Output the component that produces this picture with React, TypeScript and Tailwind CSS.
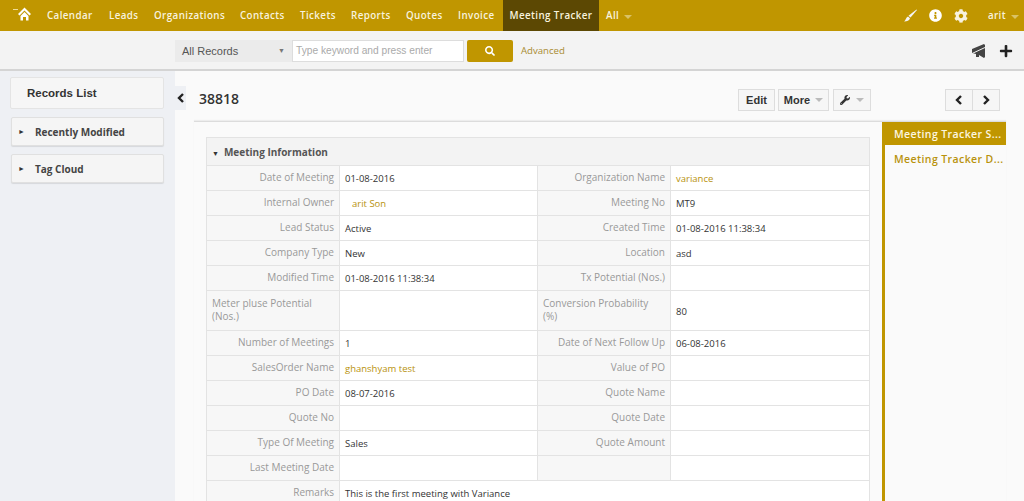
import { FaCog, FaInfoCircle, FaPlus, FaSearch, FaWrench } from "react-icons/fa";

const navItems = [
  { label: "Calendar", w: "w-[62px]" },
  { label: "Leads", w: "w-[45px]" },
  { label: "Organizations", w: "w-[86px]" },
  { label: "Contacts", w: "w-[60px]" },
  { label: "Tickets", w: "w-[51px]" },
  { label: "Reports", w: "w-[55px]" },
  { label: "Quotes", w: "w-[52px]" },
  { label: "Invoice", w: "w-[45px]" },
];

type Cell = { label: string; value?: string; link?: boolean; pad?: boolean };

const rows: { left: Cell; right: Cell; tall?: boolean }[] = [
  { left: { label: "Date of Meeting", value: "01-08-2016" }, right: { label: "Organization Name", value: "variance", link: true } },
  { left: { label: "Internal Owner", value: "arit Son", link: true, pad: true }, right: { label: "Meeting No", value: "MT9" } },
  { left: { label: "Lead Status", value: "Active" }, right: { label: "Created Time", value: "01-08-2016 11:38:34" } },
  { left: { label: "Company Type", value: "New" }, right: { label: "Location", value: "asd" } },
  { left: { label: "Modified Time", value: "01-08-2016 11:38:34" }, right: { label: "Tx Potential (Nos.)" } },
  { left: { label: "Meter pluse Potential (Nos.)" }, right: { label: "Conversion Probability (%)", value: "80" }, tall: true },
  { left: { label: "Number of Meetings", value: "1" }, right: { label: "Date of Next Follow Up", value: "06-08-2016" } },
  { left: { label: "SalesOrder Name", value: "ghanshyam test", link: true }, right: { label: "Value of PO" } },
  { left: { label: "PO Date", value: "08-07-2016" }, right: { label: "Quote Name" } },
  { left: { label: "Quote No" }, right: { label: "Quote Date" } },
  { left: { label: "Type Of Meeting", value: "Sales" }, right: { label: "Quote Amount" } },
  { left: { label: "Last Meeting Date" }, right: { label: "" } },
];

function Chevron({ dir }: { dir: "left" | "right" }) {
  return (
    <svg width="8" height="10" viewBox="0 0 8 10" fill="none" stroke="#222" strokeWidth="2.4">
      <polyline points={dir === "left" ? "6,1 2,5 6,9" : "2,1 6,5 2,9"} />
    </svg>
  );
}

function Label({ cell, tall }: { cell: Cell; tall?: boolean }) {
  return (
    <td className={`border border-[#e3e3e3] bg-[#f7f7f7] align-middle text-[10px] leading-[13px] text-[#999] ${tall ? "pb-[2px] pl-[5px] pr-[20px] text-left" : "px-[5px] pb-[1px] text-right"}`}>
      {cell.label}
    </td>
  );
}

function Value({ cell }: { cell: Cell }) {
  return (
    <td className={`border border-[#e3e3e3] bg-white px-[5px] pt-[1px] align-middle text-[9.5px] leading-[13px] ${cell.link ? "text-[#b8920c]" : "text-[#333]"} ${cell.pad ? "pl-[12px]" : ""}`}>
      {cell.value}
    </td>
  );
}

function SideBox({ label }: { label: string }) {
  return (
    <div className="mb-[8px] ml-[11px] flex h-[29px] w-[153px] items-center rounded-[2px] border border-[#e0e0e0] bg-[#f5f5f5] pl-[6px] pt-[1px] shadow-[0_1px_1px_rgba(0,0,0,0.1)]">
      <span className="mr-[10px] text-[7px] text-[#333]">►</span>
      <span className="text-[10px] font-bold text-[#444]">{label}</span>
    </div>
  );
}

export default function App() {
  return (
    <div className="h-[501px] w-[1024px] overflow-hidden bg-[#fafafa] font-['Open_Sans',sans-serif]">
      {/* top nav */}
      <div className="flex h-[31px] items-center bg-[#c09600] pt-[1px] text-[9.8px] font-semibold tracking-[0.4px] text-[#f8f2de]">
        <div className="-mt-[4px] flex w-[47px] justify-start pl-[13px]">
          <svg width="18" height="14" viewBox="0 0 18 14" fill="#fff">
            <rect x="0" y="2" width="5" height="1" fill="#f0dd99" />
            <path d="M11.5 0.5 L18 7 L16.5 8.5 L11.5 3.5 L6.5 8.5 L5 7 Z" />
            <path d="M11.5 5 L15.5 9 V13.5 H13 V10 H10 V13.5 H7.5 V9 Z" />
          </svg>
        </div>
        {navItems.map((n) => (
          <span key={n.label} className={n.w}>{n.label}</span>
        ))}
        <div className="-mt-[1px] flex h-[31px] w-[96px] items-center justify-center bg-[#5c4803] pt-[1px]">Meeting Tracker</div>
        <span className="ml-[7px]">All</span>
        <span className="ml-[5px] mt-[2px] border-x-[4px] border-t-[4px] border-x-transparent border-t-[#d9c266]" />
        <div className="-mt-[1px] ml-auto flex items-center">
          <svg width="13" height="13" viewBox="0 0 13 13" fill="#f5f5f5">
            <path d="M12.5 0.5 L13 1 L6.5 8.5 L4.5 6.8 Z" />
            <path d="M4 7.4 L6 9.2 C5.5 11.5 3 12.5 0 12.5 C1.8 11.5 1.8 8.5 4 7.4 Z" />
          </svg>
          <FaInfoCircle className="ml-[12px] text-[13px] text-white" />
          <FaCog className="ml-[12px] text-[14px] text-[#f8f2de]" />
          <span className="ml-[20px] pt-[1px]">arit</span>
          <span className="ml-[5px] mr-[5px] mt-[2px] border-x-[4px] border-t-[4px] border-x-transparent border-t-[#d9c266]" />
        </div>
      </div>

      {/* search toolbar */}
      <div className="flex h-[40px] items-center border-b-2 border-[#d4d4d4] bg-[#f3f3f3] pl-[175px] pr-[11px] pt-[2px]">
        <div className="flex h-[22px] w-[117px] items-center justify-between bg-[#ebebeb] px-[7px] font-['Liberation_Sans',sans-serif] text-[11px] text-[#555]">
          <span>All Records</span>
          <span className="text-[7px] text-[#777]">▼</span>
        </div>
        <div className="flex h-[22px] w-[172px] items-center border border-[#ddd] bg-white px-[3px] font-['Liberation_Sans',sans-serif] text-[10.2px] text-[#aaa]">
          Type keyword and press enter
        </div>
        <div className="ml-[3px] flex h-[22px] w-[46px] items-center justify-center rounded-[2px] bg-[#c09600]">
          <FaSearch className="text-[10px] text-white" />
        </div>
        <span className="ml-[8px] text-[9.6px] text-[#a98c32]">Advanced</span>
        <svg className="ml-auto" width="15" height="14" viewBox="0 0 15 14" fill="#444">
          <path d="M1 5 L13 0 L14 1 V13 L13 14 L8 11 V13 H5 V10 L1 9 Z" />
          <path d="M0 10 L14 3.5" stroke="#f3f3f3" strokeWidth="1" />
        </svg>
        <FaPlus className="ml-[13px] text-[14px] text-[#222]" />
      </div>

      <div className="flex h-[430px]">
        {/* sidebar */}
        <div className="h-full w-[175px] shrink-0 bg-[#eef0f4] pt-[6px]">
          <div className="mb-[8px] ml-[10px] flex h-[32px] w-[154px] items-center rounded-[2px] border border-[#e4e4e4] bg-[#f6f6f6] pl-[16px] pt-[2px] font-['Liberation_Sans',sans-serif] text-[11.5px] font-bold text-[#333]">
            Records List
          </div>
          <SideBox label="Recently Modified" />
          <SideBox label="Tag Cloud" />
        </div>

        {/* main */}
        <div className="relative flex-1">
          <div className="absolute left-0 top-[15px] flex h-[24px] w-[11px] items-center justify-center bg-[#eef0f4]">
            <Chevron dir="left" />
          </div>

          <div className="flex h-[50px] items-center pl-[24px] pr-[24px]">
            <h1 className="mt-[4px] text-[14px] font-semibold text-[#333]">38818</h1>
            <div className="ml-auto mt-[8px] flex items-center font-['Liberation_Sans',sans-serif] text-[11px] font-bold text-[#333]">
              <div className="flex h-[22px] w-[37px] items-center justify-center border border-[#ddd] bg-[#f6f6f6]">Edit</div>
              <div className="ml-[3px] flex h-[22px] w-[51px] items-center justify-center gap-[5px] border border-[#ddd] bg-[#f6f6f6]">
                More
                <span className="border-x-[4px] border-t-[4px] border-x-transparent border-t-[#bbb]" />
              </div>
              <div className="ml-[4px] flex h-[22px] w-[38px] items-center justify-center gap-[6px] border border-[#ddd] bg-[#f6f6f6]">
                <FaWrench className="text-[10px]" />
                <span className="border-x-[4px] border-t-[4px] border-x-transparent border-t-[#bbb]" />
              </div>
              <div className="ml-[74px] flex h-[22px] w-[55px] border border-[#ddd] bg-[#f6f6f6]">
                <div className="flex flex-1 items-center justify-center border-r border-[#ddd]">
                  <Chevron dir="left" />
                </div>
                <div className="flex flex-1 items-center justify-center">
                  <Chevron dir="right" />
                </div>
              </div>
            </div>
          </div>

          <div className="ml-[19px] flex h-full w-[812px] border-t border-[#dcdcdc] shadow-[0_-1px_1px_rgba(0,0,0,0.05)]">
            <div className="w-[688px] shrink-0 pl-[12px] pt-[15px]">
              <table className="w-[663px] table-fixed border-collapse">
                <colgroup>
                  <col className="w-[133px]" />
                  <col className="w-[198px]" />
                  <col className="w-[133px]" />
                  <col className="w-[199px]" />
                </colgroup>
                <tbody>
                  <tr className="h-[28px]">
                    <td colSpan={4} className="border border-[#e3e3e3] bg-[#f3f3f3] pl-[5px] pt-[1px] text-[10px] font-bold text-[#555]">
                      <span className="mr-[5px] text-[7px] text-[#333]">▼</span>
                      Meeting Information
                    </td>
                  </tr>
                  {rows.map((r, i) => (
                    <tr key={i} className={r.tall ? "h-[40px]" : "h-[25px]"}>
                      <Label cell={r.left} tall={r.tall} />
                      <Value cell={r.left} />
                      <Label cell={r.right} tall={r.tall} />
                      <Value cell={r.right} />
                    </tr>
                  ))}
                  <tr className="h-[25px]">
                    <Label cell={{ label: "Remarks" }} />
                    <td colSpan={3} className="border border-[#e3e3e3] bg-white px-[5px] pt-[1px] align-middle text-[9.5px] leading-[13px] text-[#333]">
                      This is the first meeting with Variance
                    </td>
                  </tr>
                </tbody>
              </table>
            </div>

            <div className="h-full w-[124px] border-l-[3px] border-[#c09600]">
              <div className="flex h-[23px] items-center bg-[#c09600] pl-[9px] pt-[2px] text-[10.5px] font-semibold tracking-[0.4px] text-[#fdf6e0]">
                Meeting Tracker S...
              </div>
              <div className="flex h-[27px] items-center pl-[9px] pt-[2px] text-[10.5px] font-semibold tracking-[0.4px] text-[#b8920c]">
                Meeting Tracker D...
              </div>
            </div>
          </div>
        </div>
      </div>
    </div>
  );
}
